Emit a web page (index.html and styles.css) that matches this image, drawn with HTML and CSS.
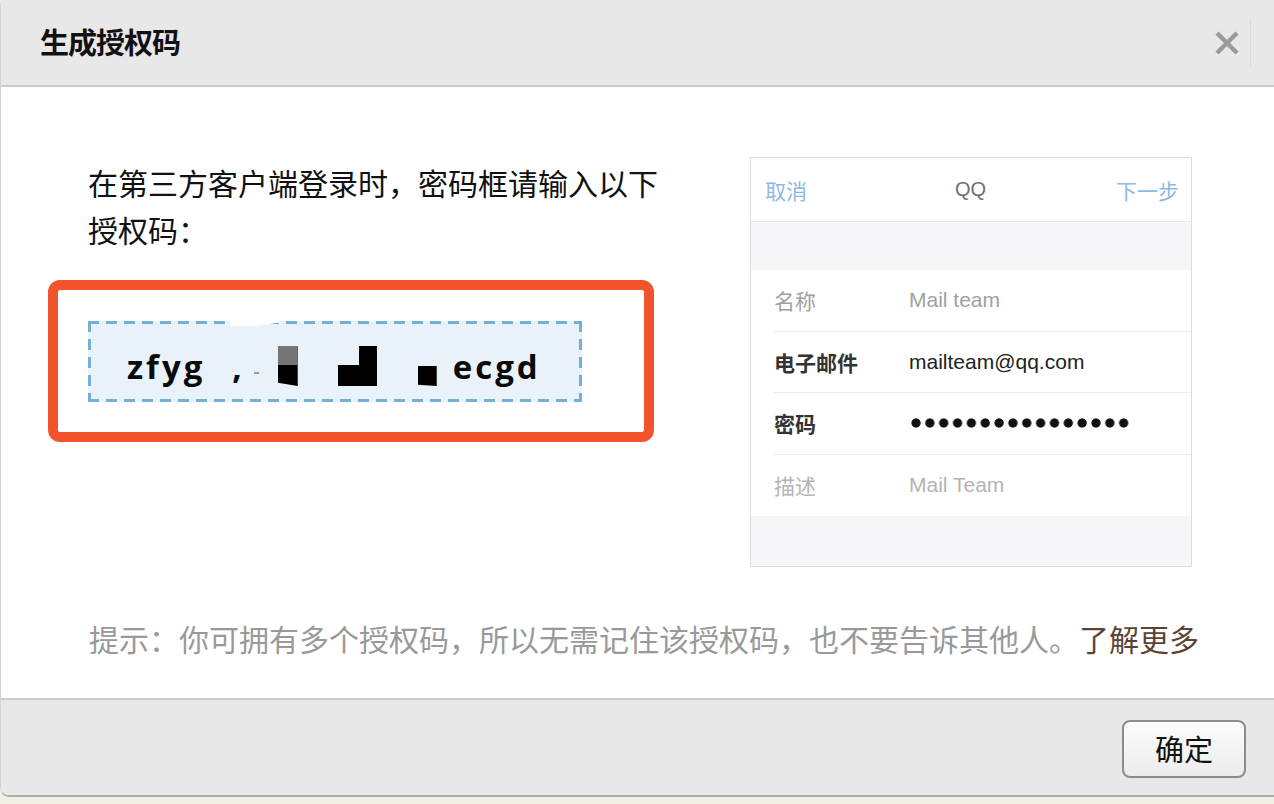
FILE: index.html
```html
<!DOCTYPE html>
<html lang="zh-CN">
<head>
<meta charset="utf-8">
<title>生成授权码</title>
<link rel="stylesheet" href="styles.css">
</head>
<body>
<div class="dialog">
  <header class="dlg-head">
    <h1 class="dlg-title">生成授权码</h1>
    <div class="dlg-close">
      <svg class="close-x" width="26" height="26" viewBox="0 0 26 26"><path d="M3 3 L23 23 M23 3 L3 23" stroke="#9a9a9a" stroke-width="4.5" stroke-linecap="butt" fill="none"/></svg>
      <span class="close-div"></span>
    </div>
  </header>
  <main class="dlg-body">
    <div class="content-row">
      <div class="left-col">
        <p class="intro">在第三方客户端登录时，密码框请输入以下<br>授权码：</p>
        <div class="highlight">
          <div class="code-box">
            <span class="notch"></span>
            <span class="code-text">zfyg</span><span class="code-comma">,</span><span class="dash"></span><span class="blk blk1"><i></i></span><span class="blk blk2"><i></i></span><span class="blk blk3"></span><span class="code-text code-end">ecgd</span>
          </div>
        </div>
      </div>
      <div class="phone">
        <div class="ph-nav">
          <span class="ph-link">取消</span>
          <span class="ph-title">QQ</span>
          <span class="ph-link">下一步</span>
        </div>
        <div class="ph-gap"></div>
        <div class="ph-list">
          <div class="ph-row"><span class="ph-label light">名称</span><span class="ph-val light">Mail team</span></div>
          <div class="ph-row"><span class="ph-label dark">电子邮件</span><span class="ph-val dark">mailteam@qq.com</span></div>
          <div class="ph-row"><span class="ph-label dark">密码</span><span class="ph-dots" aria-label="密码"></span></div>
          <div class="ph-row"><span class="ph-label lighter">描述</span><span class="ph-val lighter">Mail Team</span></div>
        </div>
      </div>
    </div>
    <p class="hint">提示：你可拥有多个授权码，所以无需记住该授权码，也不要告诉其他人。<a class="more" href="#">了解更多</a></p>
  </main>
  <footer class="dlg-foot">
    <button class="btn-ok" type="button">确定</button>
  </footer>
</div>
</body>
</html>
```

FILE: styles.css
```css
* { box-sizing: border-box; }
html, body { margin: 0; padding: 0; }
body {
  background: #f1eee6;
  font-family: "Noto Sans CJK SC", "Noto Sans", "Liberation Sans", sans-serif;
  width: 1274px;
  height: 804px;
  overflow: hidden;
}
.dialog {
  width: 1274px;
  background: #fff;
  border-left: 1px solid #d2d2d2;
  border-bottom: 2px solid #ababab;
  border-radius: 5px 0 0 9px;
  overflow: hidden;
}
.dlg-head {
  height: 87px;
  background: #e8e8e8;
  border-bottom: 2px solid #cbcbcb;
  display: flex;
  align-items: center;
  justify-content: space-between;
  padding: 0 0 0 39px;
}
.dlg-title {
  margin: 0;
  font-size: 29px;
  font-weight: 700;
  color: #111;
  letter-spacing: -1px;
  line-height: 1;
  padding-bottom: 2px;
}
.dlg-close {
  display: flex;
  align-items: center;
  height: 85px;
  padding-right: 23px;
}
.close-x { margin-right: 10px; }
.close-div {
  width: 1px;
  height: 46px;
  background: #d8d8d8;
}
.dlg-body {
  height: 613px;
  padding: 70px 82px 0 47px;
  border-bottom: 2px solid #cbcbcb;
}
.content-row {
  display: flex;
  justify-content: space-between;
  align-items: flex-start;
}
.left-col { width: 606px; }
.intro {
  margin: 2px 0 0 40px;
  font-size: 30px;
  line-height: 47px;
  color: #111;
  white-space: nowrap;
}
.highlight {
  margin-top: 27px;
  width: 606px;
  height: 162px;
  border: 10px solid #f1542a;
  border-radius: 12px;
  padding: 31px 0 0 30px;
}
.code-box {
  position: relative;
  width: 494px;
  height: 81px;
  background-color: #e9f2f8;
  background-image:
    repeating-linear-gradient(90deg, #74afd5 0 11px, transparent 11px 18px),
    repeating-linear-gradient(90deg, #74afd5 0 11px, transparent 11px 18px),
    repeating-linear-gradient(180deg, #74afd5 0 11px, transparent 11px 18px),
    repeating-linear-gradient(180deg, #74afd5 0 11px, transparent 11px 18px);
  background-size: 100% 3px, 100% 3px, 3px 100%, 3px 100%;
  background-position: 0 0, 0 100%, 0 0, 100% 0;
  background-repeat: no-repeat;
  display: flex;
  align-items: flex-end;
  padding: 0 0 19px 39px;
}
.notch {
  position: absolute;
  top: 0;
  left: 142px;
  width: 50px;
  height: 5px;
  background: #fff;
  clip-path: polygon(0 0, 100% 0, 100% 30%, 50% 100%, 0 100%);
}
.code-text {
  font-family: "Open Sans", "DejaVu Sans", sans-serif;
  font-weight: 700;
  font-size: 33px;
  line-height: 33px;
  letter-spacing: 3px;
  color: #0a0a0a;
}
.code-comma {
  font-family: "Open Sans", sans-serif;
  font-weight: 700;
  font-size: 33px;
  line-height: 33px;
  margin-left: 27px;
  color: #0a0a0a;
}
.dash {
  width: 5px;
  height: 2px;
  background: #9a9a9a;
  margin: 0 0 9px 12px;
}
.blk {
  display: inline-block;
  position: relative;
  background: #000;
  margin-bottom: -3px;
}
.blk1 {
  width: 20px;
  height: 40px;
  margin-left: 19px;
  clip-path: polygon(0 0, 100% 0, 100% 100%, 0 92%);
}
.blk1 i {
  position: absolute;
  left: 0; top: 0;
  width: 20px; height: 19px;
  background: #747576;
}
.blk2 {
  width: 39px;
  height: 40px;
  margin-left: 40px;
}
.blk2 i {
  position: absolute;
  left: 0; top: 0;
  width: 21px; height: 19px;
  background: #e9f2f8;
}
.blk3 {
  width: 19px;
  height: 20px;
  margin-left: 41px;
  clip-path: polygon(0 0, 100% 0, 100% 100%, 0 94%);
}
.code-end {
  margin-left: 16px;
}
.phone {
  width: 442px;
  height: 410px;
  border: 1px solid #dcdcdc;
  background: #f6f6f8;
  font-size: 21px;
  display: flex;
  flex-direction: column;
}
.ph-nav {
  height: 64px;
  background: #fff;
  border-bottom: 1px solid #e8e8ea;
  display: flex;
  align-items: center;
  justify-content: space-between;
  padding: 0 12px 0 14px;
}
.ph-link { color: #8bb9e6; }
.ph-title {
  color: #6f6f6f;
  font-family: "Liberation Sans", sans-serif;
  font-size: 20px;
  margin-left: 18px;
}
.ph-gap { height: 48px; }
.ph-list {
  background: #fff;
  padding-left: 23px;
}
.ph-row {
  height: 61.5px;
  display: flex;
  align-items: center;
  border-bottom: 1px solid #ececec;
}
.ph-row:last-child { border-bottom: none; }
.ph-label { width: 135px; }
.ph-val { font-family: "Liberation Sans", sans-serif; font-size: 21px; }
.light { color: #a0a0a0; }
.lighter { color: #b4b4b4; }
.ph-val.dark { color: #222; }
.ph-label.dark { font-weight: 700; color: #333; }
.ph-dots {
  display: block;
  width: 218px;
  height: 10px;
  margin-left: 2px;
  background: radial-gradient(circle at 5px 5px, #111 4.2px, transparent 5px) 0 0 / 13.85px 10px repeat-x;
}
.hint {
  margin: 51px 0 0 41px;
  font-size: 30px;
  line-height: 40px;
  color: #999;
  white-space: nowrap;
}
.more {
  color: #5b4436;
  text-decoration: none;
}
.dlg-foot {
  height: 95px;
  background: #e8e8e8;
  display: flex;
  align-items: center;
  justify-content: flex-end;
  padding: 2px 28px 0 0;
}
.btn-ok {
  width: 124px;
  height: 58px;
  border: 2px solid #8c8c8c;
  border-radius: 8px;
  background: linear-gradient(#fcfcfc, #ececec);
  font-family: "Noto Sans CJK SC", sans-serif;
  font-size: 29px;
  color: #111;
  padding: 0;
  line-height: 1;
}
```
